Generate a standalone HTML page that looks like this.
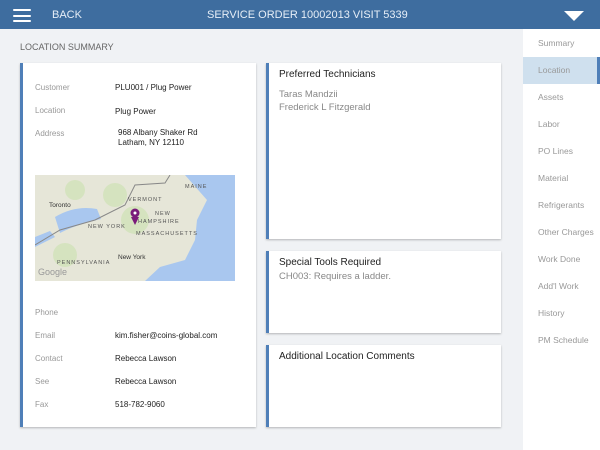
<!DOCTYPE html>
<html><head><style>
*{margin:0;padding:0;box-sizing:border-box}
body{width:600px;height:450px;background:#f0f2f5;font-family:"Liberation Sans",sans-serif;position:relative;overflow:hidden}
.hdr{position:absolute;left:0;top:0;width:600px;height:29px;background:#3e6d9f;color:#e6eef7;font-size:11px}
.hdr span{position:absolute;top:9px}
.ham{position:absolute;left:13px;top:9px;width:18px;height:13px}
.ham i{display:block;height:2px;background:#fff;margin-bottom:3.5px;border-radius:1px}
.tri{position:absolute;left:564px;top:11px;width:0;height:0;border-left:10px solid transparent;border-right:10px solid transparent;border-top:10px solid #fff}
.title{position:absolute;left:20px;top:42px;font-size:9px;color:#666}
.card{position:absolute;background:#fff;border-left:3px solid #4f7fb8;box-shadow:0 1px 2px rgba(0,0,0,.25)}
.lbl{position:absolute;left:12px;font-size:8px;color:#999}
.val{position:absolute;left:92px;font-size:8px;color:#222}
.ch{position:absolute;left:10px;top:6px;font-size:10px;color:#222}
.cb{position:absolute;left:10px;font-size:9.5px;color:#888;line-height:13px}
.side{position:absolute;left:523px;top:30px;width:77px;height:420px;background:#fff}
.side div{height:27px;line-height:27px;padding-left:15px;font-size:8.5px;color:#999}
.side .act{background:#cfe0ee;border-right:3px solid #4f7fb8}
</style></head><body>
<div class="hdr">
<div class="ham"><i></i><i></i><i></i></div>
<span style="left:52px">BACK</span>
<span style="left:207px">SERVICE ORDER 10002013 VISIT 5339</span>
<div class="tri"></div>
</div>
<div style="position:absolute;left:523px;top:29px;width:77px;height:1px;background:#fff"></div>
<div class="title">LOCATION SUMMARY</div>
<div class="card" style="left:20px;top:63px;width:236px;height:364px">
<div class="lbl" style="top:20px">Customer</div><div class="val" style="top:20px">PLU001 / Plug Power</div>
<div class="lbl" style="top:43px">Location</div><div class="val" style="top:44px">Plug Power</div>
<div class="lbl" style="top:66px">Address</div><div class="val" style="top:65px;left:95px;line-height:10px">968 Albany Shaker Rd<br>Latham, NY 12110</div>
<svg style="position:absolute;left:12px;top:112px" width="200" height="106" viewBox="0 0 200 106">
<rect width="200" height="106" fill="#e6e6d8"/>
<circle cx="80" cy="20" r="12" fill="#d5e3bf"/><circle cx="100" cy="45" r="14" fill="#d5e3bf"/><circle cx="30" cy="80" r="12" fill="#d5e3bf"/><circle cx="40" cy="15" r="10" fill="#d5e3bf"/>
<path d="M150 0 L200 0 L200 106 L110 106 L125 92 L150 85 L160 65 L162 45 L172 25 Z" fill="#a9c7ef"/>
<path d="M20 42 Q40 30 62 34 L66 44 Q40 50 25 58 Z" fill="#a9c7ef"/>
<path d="M0 62 L15 56 L20 62 L0 72 Z" fill="#a9c7ef"/>
<path d="M0 70 L25 55 L60 45 L90 30 L100 10 L130 8 L135 0" stroke="#888" fill="none" stroke-width="1"/>
<text x="14" y="32" font-size="6.5" fill="#333">Toronto</text>
<text x="93" y="26" font-size="5.5" fill="#555" letter-spacing="1">VERMONT</text>
<text x="150" y="13" font-size="5.5" fill="#555" letter-spacing="1">MAINE</text>
<text x="120" y="40" font-size="5.5" fill="#555" letter-spacing="1">NEW</text>
<text x="103" y="48" font-size="5.5" fill="#555" letter-spacing="1">HAMPSHIRE</text>
<text x="53" y="53" font-size="5.5" fill="#555" letter-spacing="1">NEW YORK</text>
<text x="101" y="60" font-size="5.5" fill="#555" letter-spacing="1">MASSACHUSETTS</text>
<text x="22" y="89" font-size="5.5" fill="#555" letter-spacing="1">PENNSYLVANIA</text>
<text x="83" y="84" font-size="6.5" fill="#333">New York</text>
<text x="3" y="100" font-size="9" fill="#999">Google</text>
<path d="M96 42 L100 50 L104 42" fill="#7a1a7a"/>
<circle cx="100" cy="38" r="4.5" fill="#7a1a7a"/><circle cx="100" cy="38" r="1.5" fill="#fff"/>
</svg>
<div class="lbl" style="top:245px">Phone</div>
<div class="lbl" style="top:268px">Email</div><div class="val" style="top:268px">kim.fisher@coins-global.com</div>
<div class="lbl" style="top:291px">Contact</div><div class="val" style="top:291px">Rebecca Lawson</div>
<div class="lbl" style="top:314px">See</div><div class="val" style="top:314px">Rebecca Lawson</div>
<div class="lbl" style="top:337px">Fax</div><div class="val" style="top:337px">518-782-9060</div>
</div>
<div class="card" style="left:266px;top:63px;width:235px;height:176px">
<div class="ch">Preferred Technicians</div>
<div class="cb" style="top:25px">Taras Mandzii<br>Frederick L Fitzgerald</div>
</div>
<div class="card" style="left:266px;top:251px;width:235px;height:82px">
<div class="ch">Special Tools Required</div>
<div class="cb" style="top:19px">CH003: Requires a ladder.</div>
</div>
<div class="card" style="left:266px;top:345px;width:235px;height:82px">
<div class="ch">Additional Location Comments</div>
</div>
<div class="side">
<div>Summary</div><div class="act">Location</div><div>Assets</div><div>Labor</div><div>PO Lines</div><div>Material</div><div>Refrigerants</div><div>Other Charges</div><div>Work Done</div><div>Add'l Work</div><div>History</div><div>PM Schedule</div>
</div>
</body></html>
